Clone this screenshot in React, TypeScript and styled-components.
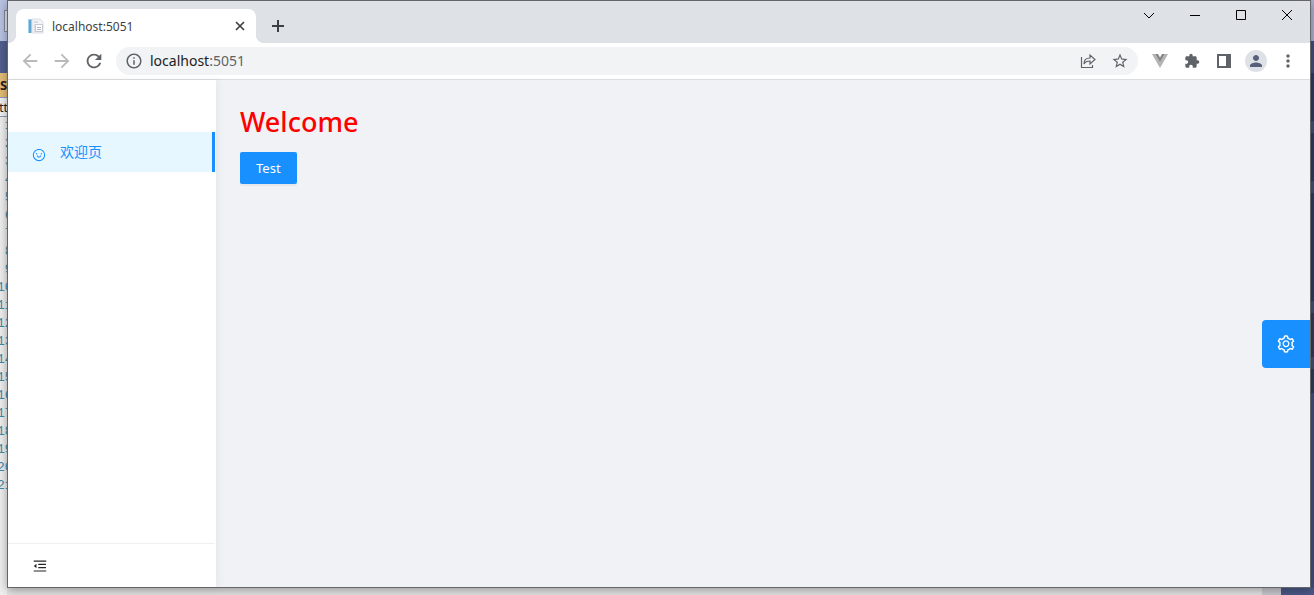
import React from "react";
import styled, { createGlobalStyle, css } from "styled-components";
import {
  MdArrowBack,
  MdArrowForward,
  MdExtension,
  MdInfoOutline,
  MdMoreVert,
  MdPerson,
  MdRefresh,
  MdStarOutline,
} from "react-icons/md";
import { AiOutlineMenuFold, AiOutlineSetting, AiOutlineSmile } from "react-icons/ai";

const GlobalStyle = createGlobalStyle`
  * { box-sizing: border-box; }
  body {
    margin: 0;
    font-family: "Noto Sans", "Noto Sans CJK SC", sans-serif;
    font-size: 14px;
    color: #202124;
  }
  button { font: inherit; cursor: pointer; }
  svg { display: block; flex: none; }
`;

/* Desktop: the editor behind shows around the browser window */
const Desktop = styled.div`
  display: grid;
  grid-template-columns: 7px minmax(0, 1fr) 3px;
  grid-template-rows: minmax(0, 1fr) 7px;
  height: 100vh;
  overflow: hidden;
`;

const EditorEdge = styled.div`
  grid-row: 1 / 3;
  overflow: hidden;
  background: #f0f0f0;
`;

const EdgeBand = styled.div<{ $height: number; $color: string }>`
  display: flex;
  align-items: center;
  justify-content: center;
  height: ${(p) => p.$height}px;
  background: ${(p) => p.$color};
  overflow: hidden;
`;

const EdgeTitle = styled.span`
  font-size: 13px;
  font-weight: 700;
`;

const EdgeField = styled(EdgeBand)`
  border: solid #8f9bbd;
  border-width: 1px 0;
  font-size: 12px;
`;

const EdgeFrame = styled.span`
  width: 3px;
  height: 22px;
  margin-left: auto;
  border: 1px solid #858b9b;
  border-right: 0;
  background: #dde3f2;
`;

const LineNumbers = styled.ol`
  display: flex;
  flex-direction: column;
  align-items: center;
  margin: 0;
  padding: 0;
  list-style: none;
`;

const LineNumber = styled.li`
  width: 18px;
  flex: none;
  height: 18px;
  font: 13px/18px "Liberation Mono", monospace;
  text-align: right;
  color: #4389a5;
`;

const RightEdge = styled.div`
  background: linear-gradient(
    #aab3d3 41px,
    #424f7e 41px 73px,
    #2b3d62 73px 121px,
    #444f78 121px 133px,
    #2b3d62 133px 181px,
    #444f78 181px 193px,
    #2b3d62 193px 301px,
    #444f78 301px 313px,
    #333c5f 313px 357px,
    #444f78 357px 369px,
    #2d3d60 369px 393px,
    #434f7c 393px
  );
`;

const BottomEdge = styled.div`
  grid-column: 2 / 4;
  display: flex;
  background: #e4e4e4;
`;

const BottomBlock = styled.span<{ $width: number; $color: string }>`
  width: ${(p) => p.$width}px;
  background: ${(p) => p.$color};

  &:first-child { margin-left: auto; }
`;

const BrowserWindow = styled.div`
  grid-column: 2;
  grid-row: 1;
  z-index: 1;
  display: flex;
  flex-direction: column;
  min-height: 0;
  border: 1px solid #646669;
  background: #fff;
  box-shadow: 0 2px 10px rgba(0, 0, 0, 0.35);
`;

const TabStrip = styled.div`
  display: flex;
  height: 42px;
  padding-left: 8px;
  background: #dee1e6;
`;

const Tab = styled.div`
  position: relative;
  display: flex;
  align-items: center;
  gap: 8px;
  width: 240px;
  height: 34px;
  margin-top: 8px;
  padding: 0 8px 0 12px;
  border-radius: 8px 8px 0 0;
  background: #fff;
  font-size: 12px;
  color: #3c4043;

  &::before,
  &::after {
    content: "";
    position: absolute;
    bottom: 0;
    width: 8px;
    height: 8px;
  }
  &::before {
    right: 100%;
    background: radial-gradient(circle at 0 0, transparent 8px, #fff 8px);
  }
  &::after {
    left: 100%;
    background: radial-gradient(circle at 100% 0, transparent 8px, #fff 8px);
  }
`;

const TabTitle = styled.span`
  flex: 1;
`;

const PlainButton = styled.button<{ $width: number; $height: number }>`
  display: flex;
  align-items: center;
  justify-content: center;
  width: ${(p) => p.$width}px;
  height: ${(p) => p.$height}px;
  padding: 0;
  border: 0;
  background: none;
  color: inherit;
`;

const NewTab = styled(PlainButton)`
  margin: 11px 0 0 8px;
  color: #3c4043;
`;

const WindowControls = styled.div`
  display: flex;
  margin-left: auto;
  color: #000;
`;

const Toolbar = styled.div`
  display: flex;
  align-items: center;
  height: 37px;
  padding: 0 6px;
  border-bottom: 1px solid #dadce0;
  background: #fff;
  color: #5f6368;
`;

const NavButton = styled(PlainButton)<{ $muted?: boolean }>`
  ${(p) => p.$muted && css`color: #bababa;`}
`;

const AddressBar = styled.div`
  display: flex;
  align-items: center;
  flex: 1;
  height: 28px;
  margin: 0 6px;
  padding: 0 2px 0 9px;
  border-radius: 14px;
  background: #f1f3f4;
`;

const Address = styled.span`
  flex: 1;
  margin-left: 7px;
  font-size: 14px;
  line-height: 20px;
`;

const Host = styled.span`
  color: #202124;
`;

const Avatar = styled.span`
  display: flex;
  align-items: center;
  justify-content: center;
  width: 22px;
  height: 22px;
  border-radius: 50%;
  background: #dee1e6;
  color: #56617a;
`;

const Page = styled.div`
  position: relative;
  display: flex;
  flex: 1;
  min-height: 0;
`;

const Sidebar = styled.aside`
  z-index: 1;
  display: flex;
  flex-direction: column;
  justify-content: space-between;
  width: 208px;
  padding: 52px 1px 0 0;
  background: #fff;
  box-shadow: 2px 0 8px rgba(29, 35, 41, 0.05);
`;

const MenuLink = styled.a`
  display: flex;
  align-items: center;
  gap: 14px;
  height: 40px;
  padding-left: 24px;
  border-right: 3px solid #1890ff;
  background: #e6f7ff;
  color: #1890ff;
  line-height: 40px;
  text-decoration: none;

  svg { margin-top: 6px; }
`;

const SidebarFooter = styled.div`
  display: flex;
  align-items: center;
  height: 44px;
  padding-left: 24px;
  border-top: 1px solid #f0f0f0;
  color: #262626;
`;

const Main = styled.main`
  flex: 1;
  padding: 24px;
  background: #f0f2f5;
`;

const Title = styled.h1`
  margin: 0 0 12px;
  font-size: 27px;
  font-weight: 500;
  line-height: 36px;
  color: #f00;
`;

const PrimaryButton = styled.button`
  height: 32px;
  padding: 0 16px;
  border: 0;
  border-radius: 2px;
  background: #1890ff;
  box-shadow: 0 2px 0 rgba(0, 0, 0, 0.045);
  font-size: 13px;
  color: #fff;
`;

const SettingsHandle = styled.button`
  position: absolute;
  top: 240px;
  right: 0;
  display: flex;
  align-items: center;
  justify-content: center;
  width: 48px;
  height: 48px;
  padding: 0;
  border: 0;
  border-radius: 4px 0 0 4px;
  background: #1890ff;
  color: #fff;
`;

const Favicon = () => (
  <svg width="16" height="16" viewBox="0 0 16 16" aria-hidden="true">
    <path d="M4 1h8l3 3v11H4z" fill="#f1f3f6" stroke="#d9dde3" />
    <rect x="0" y="1" width="4" height="14" fill="#a5d0ea" />
    <rect x="1" y="2" width="2" height="13" fill="#5ea6d6" />
    <path d="M6 4h4M7 6v8" stroke="#c3c9d1" />
    <path d="M7.500 6.500h7v7h-7z" fill="#fff" stroke="#c4cad3" />
    <path d="M9 9.500h4M9 11.500h4" stroke="#b2b9c4" />
  </svg>
);

const Stroke = ({ d, size, width = 1 }: { d: string; size: number; width?: number }) => (
  <svg
    width={size}
    height={size}
    viewBox={`0 0 ${size} ${size}`}
    fill="none"
    stroke="currentColor"
    strokeWidth={width}
    aria-hidden="true"
  >
    <path d={d} />
  </svg>
);

const VueMark = () => (
  <svg width="16" height="16" viewBox="0 0 16 16" aria-hidden="true">
    <path d="M0 1h3.200L8 9.300 12.800 1H16L8 15z" fill="#b3b3b3" />
    <path d="M3.200 1H6l2 3.500L10 1h2.800L8 9.300z" fill="#858585" />
  </svg>
);

const SidePanel = () => (
  <svg width="14" height="14" viewBox="0 0 14 14" aria-hidden="true">
    <path d="M0 0h14v14H0zM2 2v10h7V2z" fill="currentColor" fillRule="evenodd" />
  </svg>
);

const lines = Array.from({ length: 21 }, (_, i) => i + 1);

export default function App() {
  return (
    <>
      <GlobalStyle />
      <Desktop>
        <EditorEdge aria-hidden="true">
          <EdgeBand $height={41} $color="#b9c4e3">
            <EdgeFrame />
          </EdgeBand>
          <EdgeBand $height={32} $color="#52608e" />
          <EdgeBand $height={24} $color="#e6bd77">
            <EdgeTitle>S</EdgeTitle>
          </EdgeBand>
          <EdgeField $height={20} $color="#f4f4f6">tt</EdgeField>
          <LineNumbers>
            {lines.map((n) => (
              <LineNumber key={n}>{n}</LineNumber>
            ))}
          </LineNumbers>
        </EditorEdge>

        <BrowserWindow>
          <TabStrip>
            <Tab>
              <Favicon />
              <TabTitle>localhost:5051</TabTitle>
              <PlainButton $width={16} $height={16} aria-label="Close tab">
                <Stroke size={10} width={1.7} d="M1 1l8 8M9 1L1 9" />
              </PlainButton>
            </Tab>
            <NewTab $width={28} $height={28} aria-label="New tab">
              <Stroke size={12} width={2} d="M6 0v12M0 6h12" />
            </NewTab>
            <WindowControls>
              <PlainButton $width={46} $height={28} aria-label="Search tabs">
                <Stroke size={12} d="M1 4l5 5 5-5" />
              </PlainButton>
              <PlainButton $width={46} $height={28} aria-label="Minimize">
                <Stroke size={10} d="M0 5.500h10" />
              </PlainButton>
              <PlainButton $width={46} $height={28} aria-label="Maximize">
                <Stroke size={10} d="M.5.5h9v9h-9z" />
              </PlainButton>
              <PlainButton $width={46} $height={28} aria-label="Close">
                <Stroke size={10} d="M0 0l10 10M10 0L0 10" />
              </PlainButton>
            </WindowControls>
          </TabStrip>

          <Toolbar>
            <NavButton $width={32} $height={28} $muted aria-label="Back">
              <MdArrowBack size={22} />
            </NavButton>
            <NavButton $width={32} $height={28} $muted aria-label="Forward">
              <MdArrowForward size={22} />
            </NavButton>
            <NavButton $width={32} $height={28} aria-label="Reload">
              <MdRefresh size={22} />
            </NavButton>
            <AddressBar>
              <MdInfoOutline size={18} />
              <Address>
                <Host>localhost</Host>:5051
              </Address>
              <NavButton $width={32} $height={28} aria-label="Share">
                <Stroke
                  size={16}
                  d="M1.500 4v10.500h11V12M4 11c0-4 2-6 6-6V2l5 4.500-5 4.500V8C7 8 5 9 4 11z"
                  width={1.2}
                />
              </NavButton>
              <NavButton $width={32} $height={28} aria-label="Bookmark">
                <MdStarOutline size={18} />
              </NavButton>
            </AddressBar>
            <NavButton $width={32} $height={28} aria-label="Vue devtools">
              <VueMark />
            </NavButton>
            <NavButton $width={32} $height={28} aria-label="Extensions">
              <MdExtension size={16} />
            </NavButton>
            <NavButton $width={32} $height={28} aria-label="Side panel">
              <SidePanel />
            </NavButton>
            <NavButton $width={32} $height={28} aria-label="Profile">
              <Avatar>
                <MdPerson size={18} />
              </Avatar>
            </NavButton>
            <NavButton $width={32} $height={28} aria-label="Menu">
              <MdMoreVert size={20} />
            </NavButton>
          </Toolbar>

          <Page>
            <Sidebar>
              <nav>
                <MenuLink href="#welcome">
                  <AiOutlineSmile size={14} />
                  欢迎页
                </MenuLink>
              </nav>
              <SidebarFooter>
                <PlainButton $width={16} $height={16} aria-label="Collapse menu">
                  <AiOutlineMenuFold size={16} />
                </PlainButton>
              </SidebarFooter>
            </Sidebar>
            <Main>
              <Title>Welcome</Title>
              <PrimaryButton>Test</PrimaryButton>
            </Main>
            <SettingsHandle aria-label="Settings">
              <AiOutlineSetting size={20} />
            </SettingsHandle>
          </Page>
        </BrowserWindow>

        <RightEdge />
        <BottomEdge>
          <BottomBlock $width={19} $color="#cacad1" />
          <BottomBlock $width={33} $color="#4c5987" />
        </BottomEdge>
      </Desktop>
    </>
  );
}
